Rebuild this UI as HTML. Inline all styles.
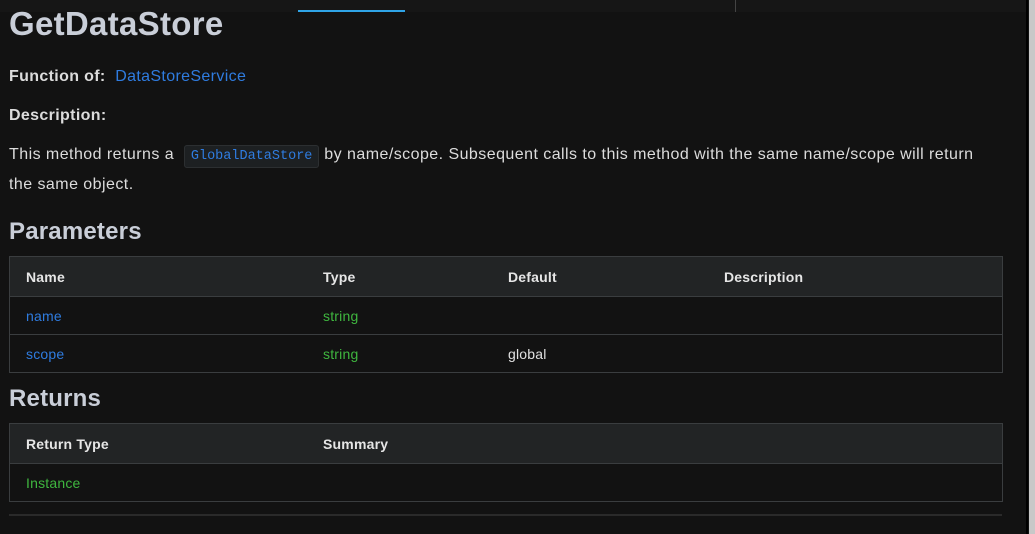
<!DOCTYPE html>
<html><head><style>
body{margin:0;width:1035px;height:534px;background:#121212;overflow:hidden;font-family:"Liberation Sans",sans-serif;color:#e0e0e0;position:relative}
.top{position:absolute;left:0;top:0;width:1026px;height:12px;background:#161616}
.ul{position:absolute;left:298px;top:10px;width:107px;height:2px;background:#2fa4e7}
.vd{position:absolute;left:735px;top:0;width:1px;height:12px;background:#444}
.sb1{position:absolute;left:1026px;top:0;width:2px;height:534px;background:#000}
.sb2{position:absolute;left:1029px;top:0;width:6px;height:534px;background:#c8c8c8}
h1{position:absolute;left:9px;top:5px;margin:0;font-size:33px;font-weight:bold;color:#c9ced8;letter-spacing:0.3px}
.t{position:absolute;left:9px;font-size:16px;color:#dcdcdc;letter-spacing:0.35px}
b{font-weight:bold}
a{color:#2f7ce0;text-decoration:none}
code{font-family:"Liberation Mono",monospace;font-size:13.5px;color:#2f7ce0;background:#1d2022;border:1px solid #2c2f31;border-radius:3px;padding:3px 6px;letter-spacing:0}
h2{position:absolute;left:9px;margin:0;font-size:24px;font-weight:bold;color:#c9ced8;letter-spacing:0.2px}
table{position:absolute;left:9px;width:994px;border-collapse:collapse;font-size:14px;letter-spacing:0.2px}
tr{border:1px solid #3a3d3f}
td,th{text-align:left;padding:0 0 0 16px}
th{background:#222425;height:39px;font-weight:bold;color:#e6e6e6}
td{height:37px;color:#e0e0e0}
.g{color:#3fb63f}
hr{position:absolute;left:9px;top:514px;width:993px;margin:0;border:0;border-top:2px solid #2a2a2a}
</style></head><body>
<div class="top"></div><div class="ul"></div><div class="vd"></div>
<div class="sb1"></div><div class="sb2"></div>
<h1>GetDataStore</h1>
<div class="t" style="top:68px"><b>Function of:</b>&nbsp; <a>DataStoreService</a></div>
<div class="t" style="top:107px"><b>Description:</b></div>
<div class="t" style="width:995px;line-height:28px;top:141px;letter-spacing:0.45px">This method returns a&nbsp; <code>GlobalDataStore</code> by name/scope. Subsequent calls to this method with the same name/scope will return<br>the same object.</div>
<h2 style="top:218px">Parameters</h2>
<table style="top:256px">
<tr><th style="width:281px">Name</th><th style="width:169px">Type</th><th style="width:200px">Default</th><th>Description</th></tr>
<tr><td><a>name</a></td><td class="g">string</td><td></td><td></td></tr>
<tr><td><a>scope</a></td><td class="g">string</td><td>global</td><td></td></tr>
</table>
<h2 style="top:385px">Returns</h2>
<table style="top:423px">
<tr><th style="width:281px">Return Type</th><th>Summary</th></tr>
<tr><td class="g">Instance</td><td></td></tr>
</table>
<hr>
</body></html>
